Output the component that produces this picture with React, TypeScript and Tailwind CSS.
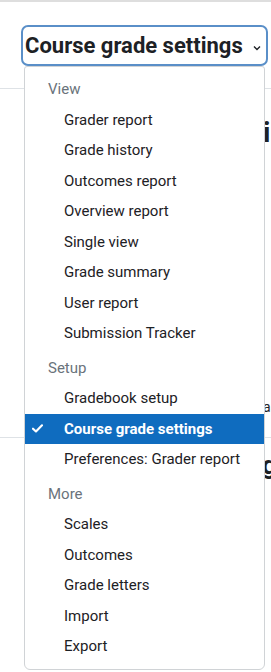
import React from "react";

const font = { fontFamily: "Roboto, 'Liberation Sans', sans-serif" };

type Entry = { kind: "header" | "item"; label: string; active?: boolean };

const groups: Entry[][] = [
  [
    { kind: "header", label: "View" },
    { kind: "item", label: "Grader report" },
    { kind: "item", label: "Grade history" },
    { kind: "item", label: "Outcomes report" },
    { kind: "item", label: "Overview report" },
    { kind: "item", label: "Single view" },
    { kind: "item", label: "Grade summary" },
    { kind: "item", label: "User report" },
    { kind: "item", label: "Submission Tracker" },
  ],
  [
    { kind: "header", label: "Setup" },
    { kind: "item", label: "Gradebook setup" },
    { kind: "item", label: "Course grade settings", active: true },
    { kind: "item", label: "Preferences: Grader report" },
  ],
  [
    { kind: "header", label: "More" },
    { kind: "item", label: "Scales" },
    { kind: "item", label: "Outcomes" },
    { kind: "item", label: "Grade letters" },
    { kind: "item", label: "Import" },
    { kind: "item", label: "Export" },
  ],
];

function Check() {
  return (
    <svg width="11" height="9" viewBox="0 0 12 10" className="shrink-0">
      <path d="M1 5.2 L4.3 8.3 L11 1.5" fill="none" stroke="white" strokeWidth="2.4" strokeLinecap="round" strokeLinejoin="round" />
    </svg>
  );
}

export default function App() {
  return (
    <div className="relative w-[271px] h-[672px] overflow-hidden bg-white" style={font}>
      <div className="h-[2px] bg-[#dedede]" />
      <div className="pt-[23px] pl-[21px]">
        <div className="w-[247px] h-[41px] border-2 border-[#5a8fc8] rounded-[7px] flex items-center pl-[2px] pr-[5px]">
          <span className="text-[22px] font-bold text-[#1d2125] leading-none whitespace-nowrap">
            Course grade settings
          </span>
          <svg width="8" height="6" viewBox="0 0 8 6" className="ml-auto mt-[4px]">
            <path d="M1 1.5 L4 4.5 L7 1.5" fill="none" stroke="#1d2125" strokeWidth="1.4" />
          </svg>
        </div>
      </div>
      <div className="mt-[22px] h-px bg-[#dee2e6]" />
      <div className="pl-[263px] pt-[30px] text-[28px] font-bold text-[#1d2125] leading-none whitespace-nowrap">
        i
      </div>
      <div className="pl-[263px] pt-[250px] text-[14px] text-[#1d2125] whitespace-nowrap">
        a<span className="text-[#f0a040]">a</span>
      </div>
      <div className="mt-[19px] h-px bg-[#dee2e6]" />
      <div className="pl-[262px] pt-[14px] text-[26px] font-bold text-[#1d2125] leading-none whitespace-nowrap">
        g
      </div>

      <div className="absolute left-[24px] top-[66px] w-[241px] bg-white border border-[#d0d3d6] rounded-b-[6px] rounded-t-[3px] pt-[7px] pb-[7px]">
        {groups.map((g, gi) => (
          <div key={gi} className={gi > 0 ? "mt-[4px]" : ""}>
            {g.map((e, i) =>
              e.kind === "header" ? (
                <div key={i} className="h-[30.5px] flex items-center pl-[23px] text-[15px] text-[#6a737b]">
                  {e.label}
                </div>
              ) : e.active ? (
                <div key={i} className="h-[30.5px] flex items-center bg-[#0f6cbf] text-white text-[15px] font-bold">
                  <div className="w-[39px] flex items-center pl-[7px]">
                    <Check />
                  </div>
                  <span className="whitespace-nowrap">{e.label}</span>
                </div>
              ) : (
                <div key={i} className="h-[30.5px] flex items-center pl-[39px] text-[15px] text-[#1d2125] whitespace-nowrap">
                  {e.label}
                </div>
              )
            )}
          </div>
        ))}
      </div>
    </div>
  );
}
